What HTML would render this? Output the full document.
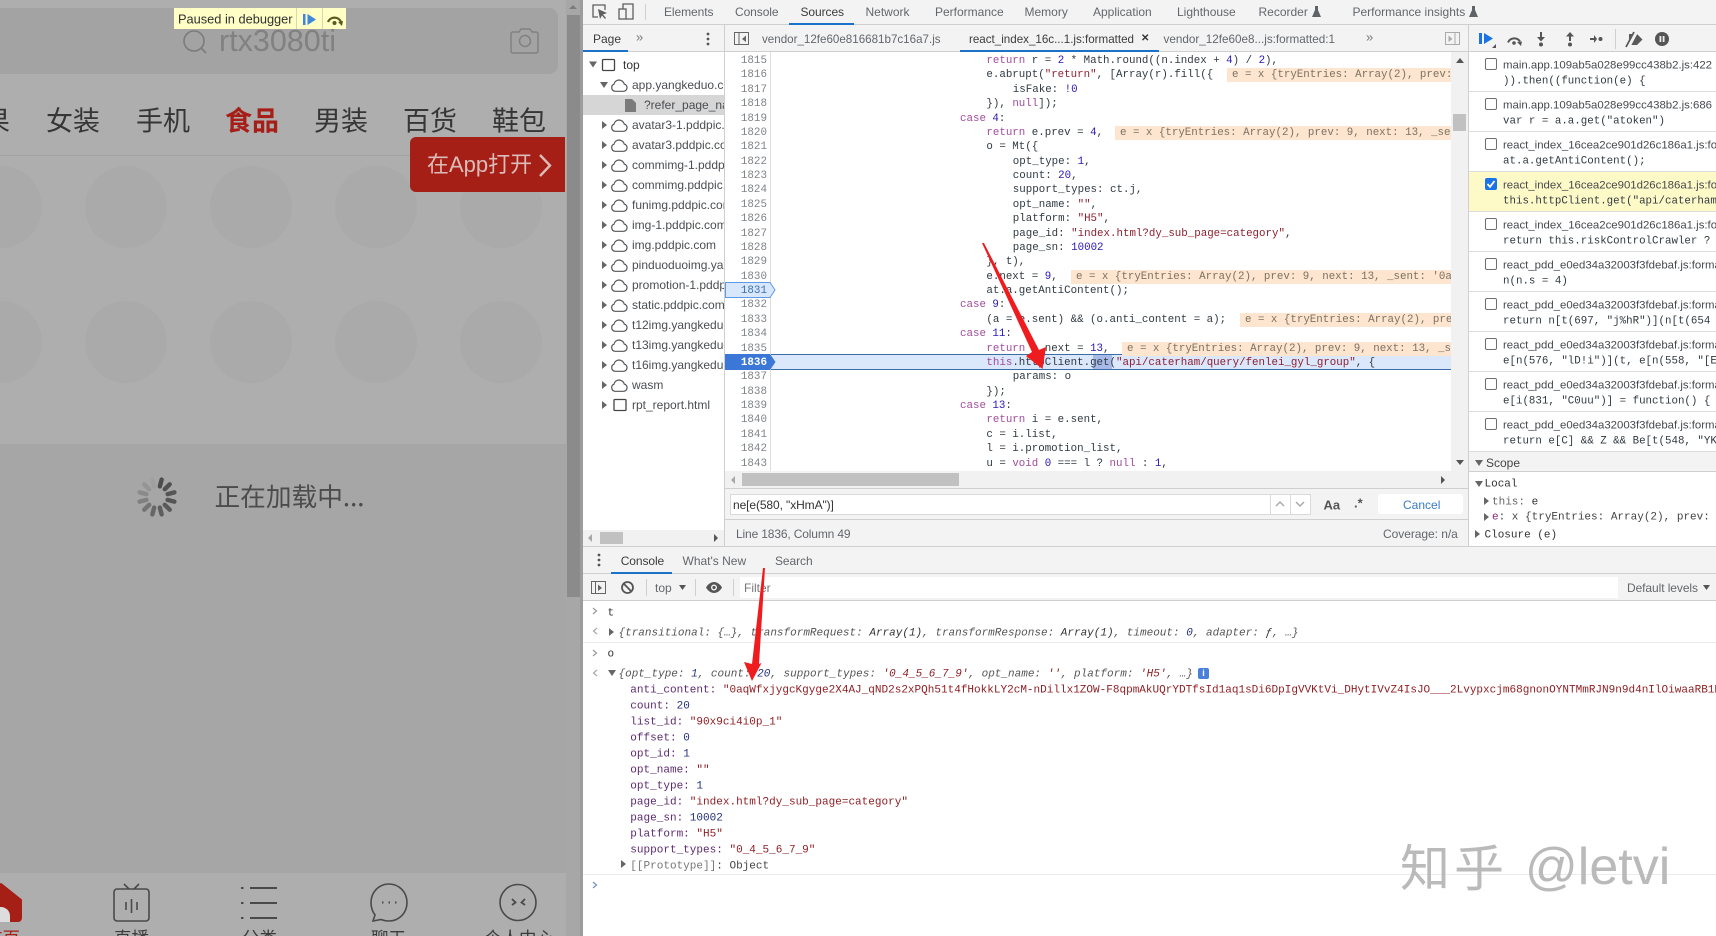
<!DOCTYPE html>
<html lang="zh"><head><meta charset="utf-8"><title>DevTools</title>
<style>
*{box-sizing:border-box}
html,body{margin:0;padding:0;width:1716px;height:936px;overflow:hidden;background:#fff}
body{position:relative;font-family:"Liberation Sans","Noto Sans CJK SC",sans-serif;font-size:12px;color:#63676c}
.a{position:absolute}
.t{position:absolute;white-space:nowrap;line-height:1;transform:translateY(-50%)}
.m{font-family:"Liberation Mono","DejaVu Sans Mono",monospace}
svg{position:absolute;overflow:visible}
.cat{font-size:27px;color:#363636;font-family:"Noto Sans CJK SC",sans-serif}
.nav{font-size:17.5px;color:#3c3c3c;font-family:"Noto Sans CJK SC",sans-serif}
.dot{position:absolute;border-radius:50%;background:#aaa;width:82px;height:82px}
.tree{left:632px;color:#4a4e52}
.code{position:absolute;left:724px;top:54px;width:727px;height:417px;overflow:hidden;font:10.8px/14.39px "Liberation Mono","DejaVu Sans Mono",monospace;color:#303942}
.l{position:relative;height:14.39px;white-space:pre}
.n{position:absolute;left:0;width:43px;text-align:right;color:#808488;font-size:10.9px}
.x{position:absolute;left:236px}.y{position:absolute;left:262.4px}.z{position:absolute;left:288.8px}
.K{color:#a14c9c}.N{color:#2a17b8}.S{color:#8d2030}
.v{position:absolute;right:0;top:0;height:14px;background:#fde5cf;color:#7d7163;padding-left:5px;overflow:hidden}
.cb{position:absolute;left:1485px;width:12px;height:12px;border:1px solid #6f6f6f;border-radius:2px;background:#fff}
.bl{position:absolute;left:1469px;width:247px;height:1px;background:#dcdcdc}
.r1{left:1503px;color:#46494d;font-size:11.4px}
.r2{left:1503px;font-size:10.8px;color:#303942}
.cv{left:630.3px;font-size:11.03px;font-family:"Liberation Mono","DejaVu Sans Mono",monospace;color:#5c2a70}
.cv .S{color:#8f1f24}.cv .N{color:#24307c}.cv .P{color:#444}
</style></head>
<body>

<!-- LEFT: mobile page -->
<div class="a" style="left:0;top:0;width:566px;height:444px;background:#aeaeae"></div>
<div class="a" style="left:0;top:444px;width:566px;height:429px;background:#a6a6a6"></div>
<div class="a" style="left:0;top:873px;width:566px;height:63px;background:#aeaeae"></div>
<div class="a" style="left:566px;top:0;width:14px;height:936px;background:#a7a7a7"></div>
<div class="a" style="left:567px;top:15px;width:13px;height:582px;background:#8b8b8b"></div>
<svg style="left:568px;top:3px" width="10" height="8"><path d="M1 6L5 2 9 6z" fill="#7c7c7c"/></svg>
<div class="a" style="left:-12px;top:8px;width:570px;height:66px;background:#a3a3a3;border-radius:9px"></div>
<div class="t" style="left:219px;top:41px;font-size:30.5px;color:#818181">rtx3080ti</div>
<svg style="left:183px;top:30px" width="25" height="24" fill="none" stroke="#7b7b7b" stroke-width="1.6"><circle cx="11" cy="11" r="10"/><path d="M18 18l5 5"/></svg>
<svg style="left:510px;top:27px" width="30" height="27" fill="none" stroke="#818181" stroke-width="1.5"><path d="M3 5h6l2-3h9l2 3h4a2 2 0 0 1 2 2v17a2 2 0 0 1-2 2H3a2 2 0 0 1-2-2V7a2 2 0 0 1 2-2z"/><circle cx="15" cy="14" r="5.5"/></svg>

<div class="a" style="left:0;top:155px;width:566px;height:1px;background:#a3a3a3"></div>
<div class="t cat" style="left:-17px;top:119px">果</div>
<div class="t cat" style="left:46px;top:119px">女装</div>
<div class="t cat" style="left:136px;top:119px">手机</div>
<div class="t cat" style="left:225px;top:119px;color:#a61e17;font-weight:700">食品</div>
<div class="t cat" style="left:314px;top:119px">男装</div>
<div class="t cat" style="left:403px;top:119px">百货</div>
<div class="t cat" style="left:492px;top:119px">鞋包</div>

<div class="dot" style="left:-40px;top:166px"></div><div class="dot" style="left:85px;top:166px"></div><div class="dot" style="left:210px;top:166px"></div><div class="dot" style="left:335px;top:166px"></div><div class="dot" style="left:460px;top:166px"></div>
<div class="dot" style="left:-40px;top:301px"></div><div class="dot" style="left:85px;top:301px"></div><div class="dot" style="left:210px;top:301px"></div><div class="dot" style="left:335px;top:301px"></div><div class="dot" style="left:460px;top:301px"></div>

<div class="a" style="left:410px;top:137px;width:155px;height:55px;background:#a61f17;border-radius:6px 0 0 6px"></div>
<div class="t" style="left:427px;top:165px;font-size:22px;color:#dcbcb8;font-family:'Liberation Sans','Noto Sans CJK SC',sans-serif">在App打开</div>
<svg style="left:538px;top:154px" width="14" height="23" fill="none" stroke="#dcbcb8" stroke-width="2.4"><path d="M2 1l10 10.5L2 22"/></svg>

<!-- paused banner -->
<div class="a" style="left:174px;top:8px;width:172px;height:21px;background:#ffffc6"></div>
<div class="t" style="left:178px;top:20px;font-size:12.8px;color:#303030">Paused in debugger</div>
<div class="a" style="left:296px;top:8px;width:1px;height:21px;background:#d8d8b0"></div>
<div class="a" style="left:322px;top:8px;width:1px;height:21px;background:#d8d8b0"></div>
<svg style="left:302px;top:13px" width="15" height="14"><path d="M1 1h2.5v11H1z" fill="#3f86dc"/><path d="M5.5 1L14 6.5 5.500 12z" fill="#3f86dc"/></svg>
<svg style="left:326px;top:13px" width="18" height="14" fill="none"><path d="M2 9a7 7 0 0 1 13 0" stroke="#5a5a20" stroke-width="2.2"/><path d="M12 9l5-1-1 5z" fill="#5a5a20"/><circle cx="8.5" cy="10" r="2" fill="#5a5a20"/></svg>

<!-- spinner -->
<svg style="left:136px;top:476px" width="42" height="42" viewBox="-21 -21 42 42" stroke="#4d4d4d" stroke-width="4.4" stroke-linecap="round">
<g><line x1="0" y1="-11" x2="0" y2="-18" transform="rotate(15)" opacity="1"/><line x1="0" y1="-11" x2="0" y2="-18" transform="rotate(45)" opacity=".95"/><line x1="0" y1="-11" x2="0" y2="-18" transform="rotate(75)" opacity=".9"/><line x1="0" y1="-11" x2="0" y2="-18" transform="rotate(105)" opacity=".9"/><line x1="0" y1="-11" x2="0" y2="-18" transform="rotate(135)" opacity=".85"/><line x1="0" y1="-11" x2="0" y2="-18" transform="rotate(165)" opacity=".8"/><line x1="0" y1="-11" x2="0" y2="-18" transform="rotate(195)" opacity=".7"/><line x1="0" y1="-11" x2="0" y2="-18" transform="rotate(225)" opacity=".55"/><line x1="0" y1="-11" x2="0" y2="-18" transform="rotate(255)" opacity=".42"/><line x1="0" y1="-11" x2="0" y2="-18" transform="rotate(285)" opacity=".3"/><line x1="0" y1="-11" x2="0" y2="-18" transform="rotate(315)" opacity=".18"/><line x1="0" y1="-11" x2="0" y2="-18" transform="rotate(345)" opacity=".06"/></g></svg>
<div class="t" style="left:214.5px;top:496px;font-size:25.7px;color:#4c4c4c;font-family:'Noto Sans CJK SC',sans-serif">正在加载中...</div>

<!-- bottom nav -->
<svg style="left:-20px;top:883px" width="44" height="40"><path d="M21 1L41 17v18a3 3 0 0 1-3 3H4a3 3 0 0 1-3-3V17z" fill="#a61f17" stroke="#a61f17" stroke-width="2" stroke-linejoin="round"/><path d="M12 39v-6a9 9 0 0 1 18 0v6z" fill="#ddd"/></svg>
<svg style="left:113px;top:883px" width="38" height="39" fill="none" stroke="#4a4a4a" stroke-width="1.6"><rect x="1" y="6" width="35" height="32" rx="3"/><path d="M11 1l5 5M26 1l-5 5"/><path d="M13 19v8M18.500 16v14M24 19v8"/></svg>
<svg style="left:240px;top:885px" width="38" height="36" stroke="#4a4a4a"><path d="M10 3h27M10 18h27M10 33h27" stroke-width="2"/><path d="M1 3h2.500M1 18h2.500M1 33h2.500" stroke-width="2"/></svg>
<svg style="left:370px;top:883px" width="39" height="40" fill="none" stroke="#4a4a4a" stroke-width="1.6"><path d="M19 1c10 0 18 8 18 18.500S29 38 19 38c-3 0-6-.7-8-1.500L3 38l2-6c-2.600-3.500-4-8-4-12.500C1 9 9 1 19 1z"/><path d="M12 19.500h1.500M18.500 19.500h1.500M25 19.500h1.500" stroke-width="2"/></svg>
<svg style="left:499px;top:883px" width="39" height="40" fill="none" stroke="#4a4a4a" stroke-width="1.6"><circle cx="19" cy="19.500" r="18"/><path d="M13 16l3.500 3.500L13 22M26 16l-3.500 3.500L26 22" stroke-width="1.800"/></svg>
<div class="t nav" style="left:-15px;top:938px;color:#a61f17">首页</div>
<div class="t nav" style="left:114px;top:938px">直播</div>
<div class="t nav" style="left:242px;top:938px">分类</div>
<div class="t nav" style="left:371px;top:938px">聊天</div>
<div class="t nav" style="left:484px;top:938px">个人中心</div>

<!-- DEVTOOLS base -->
<div class="a" style="left:580px;top:0;width:3px;height:936px;background:#9c9c9c"></div>
<div class="a" style="left:583px;top:0;width:1133px;height:25px;background:#f3f3f3;border-bottom:1px solid #cfcfcf"></div>
<div class="a" style="left:583px;top:25px;width:1133px;height:27px;background:#f3f3f3;border-bottom:1px solid #cfcfcf"></div>

<svg style="left:592px;top:4px" width="16" height="15" fill="none" stroke="#5f5f5f" stroke-width="1.300"><path d="M6 13H1V1h12v5"/><path d="M6 5l9 4-4 1.500L14 14l-1 1-3-3.500L8 15z" fill="#5f5f5f" stroke="none"/></svg>
<svg style="left:618px;top:3px" width="16" height="17" fill="none" stroke="#5f5f5f" stroke-width="1.300"><path d="M5 6V1h10v15H8"/><rect x="1" y="6" width="7" height="10" fill="#f3f3f3"/></svg>
<div class="a" style="left:645px;top:4px;width:1px;height:16px;background:#cfcfcf"></div>
<div class="t" style="left:664px;top:12px;letter-spacing:-.08px">Elements</div>
<div class="t" style="left:735px;top:12px;letter-spacing:-.08px">Console</div>
<div class="t" style="left:800.500px;top:12px;color:#3c3c3c;letter-spacing:-.08px">Sources</div>
<div class="a" style="left:789px;top:23px;width:65px;height:2px;background:#1a73c8"></div>
<div class="t" style="left:865.500px;top:12px">Network</div>
<div class="t" style="left:935px;top:12px">Performance</div>
<div class="t" style="left:1024.500px;top:12px">Memory</div>
<div class="t" style="left:1093px;top:12px">Application</div>
<div class="t" style="left:1177px;top:12px">Lighthouse</div>
<div class="t" style="left:1258.500px;top:12px">Recorder</div>
<svg style="left:1312px;top:6px" width="9" height="11"><path d="M3 0h3v4l3 7H0l3-7z" fill="#5f6368"/></svg>
<div class="t" style="left:1352.500px;top:12px">Performance insights</div>
<svg style="left:1469px;top:6px" width="9" height="11"><path d="M3 0h3v4l3 7H0l3-7z" fill="#5f6368"/></svg>

<div class="t" style="left:593px;top:39px;color:#3c3c3c">Page</div>
<div class="a" style="left:583px;top:50px;width:45px;height:2px;background:#1a73c8"></div>
<div class="t" style="left:636px;top:37px;font-size:13px;color:#777">»</div>
<svg style="left:706px;top:32px" width="4" height="14" fill="#555"><circle cx="2" cy="2" r="1.400"/><circle cx="2" cy="7" r="1.400"/><circle cx="2" cy="12" r="1.400"/></svg>
<div class="a" style="left:724px;top:25px;width:1px;height:521px;background:#cfcfcf"></div>
<svg style="left:734px;top:32px" width="16" height="14" fill="none" stroke="#666"><rect x=".5" y=".5" width="14" height="12"/><path d="M5 1v12" /><path d="M12 3.500L8 7l4 3z" fill="#666" stroke="none"/></svg>
<div class="t" style="left:762px;top:40px;font-size:11.6px">vendor_12fe60e816681b7c16a7.js</div>
<div class="t" style="left:969px;top:40px;font-size:11.6px;color:#3c3c3c">react_index_16c...1.js:formatted</div>
<div class="t" style="left:1141px;top:38.500px;font-size:10px;color:#333;font-weight:700">✕</div>
<div class="a" style="left:960px;top:50px;width:199px;height:2px;background:#1a73c8"></div>
<div class="t" style="left:1163.500px;top:40px;font-size:11.7px">vendor_12fe60e8...js:formatted:1</div>
<div class="t" style="left:1366px;top:37px;font-size:13px;color:#777">»</div>
<svg style="left:1445px;top:32px" width="16" height="14" fill="none" stroke="#aaa"><rect x=".5" y=".5" width="14" height="12"/><path d="M10 1v12"/><path d="M3.500 3.500L7.500 7l-4 3z" fill="#aaa" stroke="none"/></svg>
<div class="a" style="left:1468px;top:25px;width:1px;height:521px;background:#cfcfcf"></div>

<!-- debug toolbar -->
<svg style="left:1479px;top:31px" width="18" height="18"><path d="M0 2h3v11H0z" fill="#1a73e8"/><path d="M5 2l9 5.500L5 13z" fill="#1a73e8"/><path d="M13 17l4-4v4z" fill="#555"/></svg>
<svg style="left:1506px;top:33px" width="17" height="13" fill="none"><path d="M2 9.500a6.800 6.800 0 0 1 12-1" stroke="#555" stroke-width="2"/><path d="M11 9l5-.500-1 4.500z" fill="#555"/><circle cx="8" cy="10" r="1.800" fill="#555"/></svg>
<svg style="left:1536px;top:32px" width="10" height="15" fill="#555"><path d="M4 0h2v5h3L5 9.500 1 5h3z"/><circle cx="5" cy="12.500" r="2"/></svg>
<svg style="left:1565px;top:32px" width="10" height="15" fill="#555"><path d="M5 0l4 4.500H6V9H4V4.500H1z"/><circle cx="5" cy="12.500" r="2"/></svg>
<svg style="left:1590px;top:34px" width="13" height="10" fill="#555"><path d="M0 4h4V1l3 4-3 4V6H0z"/><circle cx="10.500" cy="5" r="2"/></svg>
<div class="a" style="left:1615px;top:29px;width:1px;height:20px;background:#cfcfcf"></div>
<svg style="left:1625px;top:32px" width="18" height="15"><path d="M4 2h8l5.500 5.500L12 13H4z" fill="#5a5a5a"/><path d="M11 0L3 15" stroke="#f3f3f3" stroke-width="4"/><path d="M9 0L1 15" stroke="#5a5a5a" stroke-width="1.800"/></svg>
<svg style="left:1655px;top:32px" width="14" height="14"><circle cx="7" cy="7" r="7" fill="#555"/><path d="M4.500 4h1.800v6H4.500zM7.700 4h1.800v6H7.700z" fill="#eee"/></svg>

<!-- file tree -->
<div class="a" style="left:583px;top:95px;width:141px;height:20px;background:#d6d6d6"></div>
<svg width="0" height="0"><symbol id="cl" viewBox="0 0 18 13"><path d="M5 12.300H13.500a3.700 3.700 0 0 0 .7-7.300A5.400 5.400 0 0 0 9 1 5.200 5.200 0 0 0 4 5.200 3.700 3.700 0 0 0 5 12.300z" fill="none" stroke="#555" stroke-width="1.200"/></symbol></svg>
<div class="a" style="left:583px;top:52px;width:141px;height:478px;overflow:hidden">
<svg style="left:-583px;top:-52px" width="724" height="530" >
<g fill="#666"><path d="M589 61.500h8l-4 6zM600 82l8 0-4 6z"/><path d="M602 121v8l5-4zM602 141v8l5-4zM602 161v8l5-4zM602 181v8l5-4zM602 201v8l5-4zM602 221v8l5-4zM602 241v8l5-4zM602 261v8l5-4zM602 281v8l5-4zM602 301v8l5-4zM602 321v8l5-4zM602 341v8l5-4zM602 361v8l5-4zM602 381v8l5-4zM602 401v8l5-4z"/></g>
<rect x="602.500" y="59.500" width="12" height="11" rx="1" fill="none" stroke="#444" stroke-width="1.300"/>
<path d="M625 99h7l4 4v9h-11z" fill="#7b7b7b"/>
<use href="#cl" x="610" y="79" width="18" height="13"/><use href="#cl" x="610" y="119" width="18" height="13"/><use href="#cl" x="610" y="139" width="18" height="13"/><use href="#cl" x="610" y="159" width="18" height="13"/><use href="#cl" x="610" y="179" width="18" height="13"/><use href="#cl" x="610" y="199" width="18" height="13"/><use href="#cl" x="610" y="219" width="18" height="13"/><use href="#cl" x="610" y="239" width="18" height="13"/><use href="#cl" x="610" y="259" width="18" height="13"/><use href="#cl" x="610" y="279" width="18" height="13"/><use href="#cl" x="610" y="299" width="18" height="13"/><use href="#cl" x="610" y="319" width="18" height="13"/><use href="#cl" x="610" y="339" width="18" height="13"/><use href="#cl" x="610" y="359" width="18" height="13"/><use href="#cl" x="610" y="379" width="18" height="13"/>
<rect x="614" y="399.500" width="12" height="11" rx="1" fill="none" stroke="#444" stroke-width="1.300"/>
</svg>
<div class="t tree" style="left:40px;top:13px;color:#333">top</div>
<div class="t tree" style="left:49px;top:33px">app.yangkeduo.com</div>
<div class="t tree" style="left:61px;top:53px">?refer_page_name=index</div>
<div class="t tree" style="left:49px;top:73px">avatar3-1.pddpic.com</div>
<div class="t tree" style="left:49px;top:93px">avatar3.pddpic.com</div>
<div class="t tree" style="left:49px;top:113px">commimg-1.pddpic.com</div>
<div class="t tree" style="left:49px;top:133px">commimg.pddpic.com</div>
<div class="t tree" style="left:49px;top:153px">funimg.pddpic.com</div>
<div class="t tree" style="left:49px;top:173px">img-1.pddpic.com</div>
<div class="t tree" style="left:49px;top:193px">img.pddpic.com</div>
<div class="t tree" style="left:49px;top:213px">pinduoduoimg.yangkeduo.com</div>
<div class="t tree" style="left:49px;top:233px">promotion-1.pddpic.com</div>
<div class="t tree" style="left:49px;top:253px">static.pddpic.com</div>
<div class="t tree" style="left:49px;top:273px">t12img.yangkeduo.com</div>
<div class="t tree" style="left:49px;top:293px">t13img.yangkeduo.com</div>
<div class="t tree" style="left:49px;top:313px">t16img.yangkeduo.com</div>
<div class="t tree" style="left:49px;top:333px">wasm</div>
<div class="t tree" style="left:49px;top:353px">rpt_report.html</div>
</div>
<div class="a" style="left:583px;top:530px;width:141px;height:16px;background:#f1f1f1"></div>
<div class="a" style="left:600px;top:532px;width:23px;height:12px;background:#c1c1c1"></div>
<svg style="left:587px;top:534px" width="6" height="8"><path d="M5 0v8L1 4z" fill="#a8a8a8"/></svg>
<svg style="left:713px;top:534px" width="6" height="8"><path d="M1 0v8l4-4z" fill="#555"/></svg>

<!-- code -->
<div class="a" style="left:725px;top:52px;width:726px;height:419px;background:#fff"></div>
<div class="a" style="left:770px;top:52px;width:1px;height:419px;background:#dedede"></div>
<div class="a" style="left:771px;top:354px;width:680px;height:15.500px;background:#dbe7fb;border-top:1px solid #3a6ca8;border-bottom:1px solid #3a6ca8"></div>
<div class="a" style="left:1092.500px;top:355px;width:19.500px;height:13.500px;background:#a8bbe8"></div>
<svg style="left:725px;top:282px" width="51" height="16"><path d="M.5.500H45L50 8l-5 7.500H.5z" fill="#d8e7fb" stroke="#5b9ae6"/></svg>
<svg style="left:725px;top:354px" width="51" height="16"><path d="M0 0H45L50.500 8 45 16H0z" fill="#3a77d6"/></svg>
<div class="code"><div class="l"><span class="n">1815</span><span class="y"><span class="K">return</span> r = <span class="N">2</span> * Math.round((n.index + <span class="N">4</span>) / <span class="N">2</span>),</span></div><div class="l"><span class="n">1816</span><span class="y">e.abrupt(<span class="S">"return"</span>, [Array(r).fill({</span><span class="v" style="left:503px">e = x {tryEntries: Array(2), prev: 9, next: 13, _sent</span></div><div class="l"><span class="n">1817</span><span class="z">isFake: <span class="N">!0</span></span></div><div class="l"><span class="n">1818</span><span class="y">}), <span class="K">null</span>]);</span></div><div class="l"><span class="n">1819</span><span class="x"><span class="K">case</span> <span class="N">4</span>:</span></div><div class="l"><span class="n">1820</span><span class="y"><span class="K">return</span> e.prev = <span class="N">4</span>,</span><span class="v" style="left:391px">e = x {tryEntries: Array(2), prev: 9, next: 13, _sent: '0aqWfxjyg</span></div><div class="l"><span class="n">1821</span><span class="y">o = Mt({</span></div><div class="l"><span class="n">1822</span><span class="z">opt_type: <span class="N">1</span>,</span></div><div class="l"><span class="n">1823</span><span class="z">count: <span class="N">20</span>,</span></div><div class="l"><span class="n">1824</span><span class="z">support_types: ct.j,</span></div><div class="l"><span class="n">1825</span><span class="z">opt_name: <span class="S">""</span>,</span></div><div class="l"><span class="n">1826</span><span class="z">platform: <span class="S">"H5"</span>,</span></div><div class="l"><span class="n">1827</span><span class="z">page_id: <span class="S">"index.html?dy_sub_page=category"</span>,</span></div><div class="l"><span class="n">1828</span><span class="z">page_sn: <span class="N">10002</span></span></div><div class="l"><span class="n">1829</span><span class="y">}, t),</span></div><div class="l"><span class="n">1830</span><span class="y">e.next = <span class="N">9</span>,</span><span class="v" style="left:347px">e = x {tryEntries: Array(2), prev: 9, next: 13, _sent: '0aqWfxjygcKgy</span></div><div class="l"><span class="n" style="color:#3a72b0">1831</span><span class="y">at.a.getAntiContent();</span></div><div class="l"><span class="n">1832</span><span class="x"><span class="K">case</span> <span class="N">9</span>:</span></div><div class="l"><span class="n">1833</span><span class="y">(a = e.sent) &amp;&amp; (o.anti_content = a);</span><span class="v" style="left:516px">e = x {tryEntries: Array(2), prev: 9, next: 13</span></div><div class="l"><span class="n">1834</span><span class="x"><span class="K">case</span> <span class="N">11</span>:</span></div><div class="l"><span class="n">1835</span><span class="y"><span class="K">return</span> e.next = <span class="N">13</span>,</span><span class="v" style="left:398px">e = x {tryEntries: Array(2), prev: 9, next: 13, _sent: '0aqWfxjyg</span></div><div class="l"><span class="n" style="color:#fff;font-weight:700">1836</span><span class="y"><span class="K">this</span>.httpClient.get(<span class="S">"api/caterham/query/fenlei_gyl_group"</span>, {</span></div><div class="l"><span class="n">1837</span><span class="z">params: o</span></div><div class="l"><span class="n">1838</span><span class="y">});</span></div><div class="l"><span class="n">1839</span><span class="x"><span class="K">case</span> <span class="N">13</span>:</span></div><div class="l"><span class="n">1840</span><span class="y"><span class="K">return</span> i = e.sent,</span></div><div class="l"><span class="n">1841</span><span class="y">c = i.list,</span></div><div class="l"><span class="n">1842</span><span class="y">l = i.promotion_list,</span></div><div class="l"><span class="n">1843</span><span class="y">u = <span class="K">void</span> <span class="N">0</span> === l ? <span class="K">null</span> : <span class="N">1</span>,</span></div></div>

<!-- code scrollbars -->
<div class="a" style="left:1451px;top:52px;width:17px;height:436px;background:#f1f1f1"></div>
<div class="a" style="left:1453px;top:114px;width:13px;height:17px;background:#c1c1c1"></div>
<svg style="left:1456px;top:58px" width="8" height="5"><path d="M0 5L4 0l4 5z" fill="#555"/></svg>
<svg style="left:1456px;top:460px" width="8" height="5"><path d="M0 0h8L4 5z" fill="#555"/></svg>
<div class="a" style="left:725px;top:471px;width:726px;height:17px;background:#f1f1f1"></div>
<div class="a" style="left:742px;top:473px;width:217px;height:13px;background:#c1c1c1"></div>
<svg style="left:730px;top:476px" width="6" height="8"><path d="M5 0v8L1 4z" fill="#a8a8a8"/></svg>
<svg style="left:1440px;top:476px" width="6" height="8"><path d="M1 0v8l4-4z" fill="#555"/></svg>

<!-- find bar -->
<div class="a" style="left:725px;top:488px;width:743px;height:1px;background:#cfcfcf"></div>
<div class="a" style="left:725px;top:489px;width:743px;height:30px;background:#f3f3f3"></div>
<div class="a" style="left:730px;top:494px;width:581px;height:20.500px;background:#fff;border:1px solid #dadada"></div>
<div class="t" style="left:733px;top:505px;color:#333;letter-spacing:-.1px">ne[e(580, "xHmA")]</div>
<div class="a" style="left:1270px;top:494px;width:1px;height:20px;background:#dadada"></div>
<div class="a" style="left:1290px;top:494px;width:1px;height:20px;background:#dadada"></div>
<svg style="left:1275px;top:501px" width="10" height="6" fill="none" stroke="#aaa" stroke-width="1.500"><path d="M1 5l4-4 4 4"/></svg>
<svg style="left:1295px;top:501px" width="10" height="6" fill="none" stroke="#aaa" stroke-width="1.500"><path d="M1 1l4 4 4-4"/></svg>
<div class="t" style="left:1323.500px;top:505px;color:#555;font-weight:700;font-size:13px">Aa</div>
<div class="t" style="left:1354px;top:503px;color:#555;font-weight:700;font-size:13px">.*</div>
<div class="a" style="left:1378px;top:494px;width:85px;height:20px;background:#fff;border-radius:3px"></div>
<div class="t" style="left:1403px;top:505px;color:#3a7bc8">Cancel</div>

<!-- status bar -->
<div class="a" style="left:725px;top:519px;width:743px;height:1px;background:#cfcfcf"></div>
<div class="a" style="left:725px;top:520px;width:743px;height:26px;background:#f3f3f3"></div>
<div class="t" style="left:736px;top:534px;letter-spacing:-.15px">Line 1836, Column 49</div>
<div class="t" style="left:1383px;top:534px;letter-spacing:-.05px">Coverage: n/a</div>

<!-- right panel -->
<div class="a" style="left:1469px;top:52px;width:247px;height:400px;background:#fff"></div>
<div class="a" style="left:1469px;top:172px;width:247px;height:39.500px;background:#fefac8"></div>
<div class="bl" style="top:91px"></div><div class="bl" style="top:131px"></div><div class="bl" style="top:171px"></div><div class="bl" style="top:211px"></div><div class="bl" style="top:251px"></div><div class="bl" style="top:291px"></div><div class="bl" style="top:331px"></div><div class="bl" style="top:371px"></div><div class="bl" style="top:411px"></div><div class="bl" style="top:451px"></div>
<div class="cb" style="top:58px"></div><div class="cb" style="top:98px"></div><div class="cb" style="top:138px"></div>
<div class="cb" style="top:178px;background:#1a73e8;border-color:#1a73e8"></div>
<svg style="left:1486px;top:179px" width="10" height="10" fill="none" stroke="#fff" stroke-width="1.800"><path d="M1.500 5l2.500 2.800L8.500 2"/></svg>
<div class="cb" style="top:218px"></div><div class="cb" style="top:258px"></div><div class="cb" style="top:298px"></div><div class="cb" style="top:338px"></div><div class="cb" style="top:378px"></div><div class="cb" style="top:418px"></div>
<div class="t r1" style="top:65.500px">main.app.109ab5a028e99cc438b2.js:422</div><div class="t r2 m" style="top:81.500px">)).then((function(e) {</div>
<div class="t r1" style="top:105.500px">main.app.109ab5a028e99cc438b2.js:686</div><div class="t r2 m" style="top:121.500px">var r = a.a.get("atoken")</div>
<div class="t r1" style="top:145.500px">react_index_16cea2ce901d26c186a1.js:formatted</div><div class="t r2 m" style="top:161.500px">at.a.getAntiContent();</div>
<div class="t r1" style="top:185.500px">react_index_16cea2ce901d26c186a1.js:formatted</div><div class="t r2 m" style="top:201.500px">this.httpClient.get("api/caterham</div>
<div class="t r1" style="top:225.500px">react_index_16cea2ce901d26c186a1.js:formatted</div><div class="t r2 m" style="top:241.500px">return this.riskControlCrawler ?</div>
<div class="t r1" style="top:265.500px">react_pdd_e0ed34a32003f3fdebaf.js:formatted</div><div class="t r2 m" style="top:281.500px">n(n.s = 4)</div>
<div class="t r1" style="top:305.500px">react_pdd_e0ed34a32003f3fdebaf.js:formatted</div><div class="t r2 m" style="top:321.500px">return n[t(697, "j%hR")](n[t(654</div>
<div class="t r1" style="top:345.500px">react_pdd_e0ed34a32003f3fdebaf.js:formatted</div><div class="t r2 m" style="top:361.500px">e[n(576, "lD!i")](t, e[n(558, "[E</div>
<div class="t r1" style="top:385.500px">react_pdd_e0ed34a32003f3fdebaf.js:formatted</div><div class="t r2 m" style="top:401.500px">e[i(831, "C0uu")] = function() {</div>
<div class="t r1" style="top:425.500px">react_pdd_e0ed34a32003f3fdebaf.js:formatted</div><div class="t r2 m" style="top:441.500px">return e[C] &amp;&amp; Z &amp;&amp; Be[t(548, "YK</div>

<div class="a" style="left:1469px;top:452px;width:247px;height:20px;background:#f3f3f3;border-bottom:1px solid #cfcfcf"></div>
<svg style="left:1475px;top:460px" width="8" height="6"><path d="M0 0h8L4 6z" fill="#666"/></svg>
<div class="t" style="left:1486px;top:463px;color:#444">Scope</div>
<div class="a" style="left:1469px;top:472px;width:247px;height:74px;background:#fff"></div>
<svg style="left:1475px;top:481px" width="8" height="6"><path d="M0 0h8L4 6z" fill="#666"/></svg>
<div class="t m" style="left:1484.500px;top:484.500px;font-size:11px;color:#333">Local</div>
<svg style="left:1484px;top:497px" width="6" height="8"><path d="M0 0v8l5-4z" fill="#666"/></svg>
<div class="t m" style="left:1492px;top:502.500px;font-size:11px;color:#666">this: <span style="color:#333">e</span></div>
<svg style="left:1484px;top:513px" width="6" height="8"><path d="M0 0v8l5-4z" fill="#666"/></svg>
<div class="t m" style="left:1492px;top:518px;font-size:11px;color:#444"><span style="color:#8a2a7c">e</span>: x {tryEntries: Array(2), prev: 9</div>
<svg style="left:1475px;top:530px" width="6" height="8"><path d="M0 0v8l5-4z" fill="#666"/></svg>
<div class="t m" style="left:1484.500px;top:535.500px;font-size:11px;color:#333">Closure (e)</div>

<!-- drawer -->
<div class="a" style="left:583px;top:546px;width:1133px;height:1px;background:#cfcfcf"></div>
<div class="a" style="left:583px;top:547px;width:1133px;height:54px;background:#f3f3f3"></div>
<div class="a" style="left:583px;top:573px;width:1133px;height:1px;background:#cfcfcf"></div>
<div class="a" style="left:583px;top:600px;width:1133px;height:1px;background:#cfcfcf"></div>
<svg style="left:597px;top:553px" width="4" height="14" fill="#555"><circle cx="2" cy="2" r="1.400"/><circle cx="2" cy="7" r="1.400"/><circle cx="2" cy="12" r="1.400"/></svg>
<div class="t" style="left:620.700px;top:561px;color:#3c3c3c;letter-spacing:-.08px">Console</div>
<div class="a" style="left:611px;top:571.500px;width:61px;height:2px;background:#1a73c8"></div>
<div class="t" style="left:682.500px;top:561px">What's New</div>
<div class="t" style="left:775px;top:561px;letter-spacing:-.08px">Search</div>

<svg style="left:591px;top:581px" width="15" height="14" fill="none" stroke="#666"><rect x=".5" y=".5" width="14" height="12"/><path d="M4.500 1v12"/><path d="M7 3.500L11 7l-4 3z" fill="#666" stroke="none"/></svg>
<svg style="left:621px;top:581px" width="13" height="13" fill="none" stroke="#555" stroke-width="1.800"><circle cx="6.500" cy="6.500" r="5.500"/><path d="M2.800 2.800l7.400 7.400"/></svg>
<div class="a" style="left:646px;top:579px;width:1px;height:17px;background:#cfcfcf"></div>
<div class="t" style="left:655px;top:588px">top</div>
<svg style="left:679px;top:585px" width="7" height="5"><path d="M0 0h7L3.500 5z" fill="#555"/></svg>
<div class="a" style="left:695px;top:579px;width:1px;height:17px;background:#cfcfcf"></div>
<svg style="left:706px;top:582px" width="16" height="11"><path d="M0 5.500C2 2 5 0 8 0s6 2 8 5.500C14 9 11 11 8 11S2 9 0 5.500z" fill="#555"/><circle cx="8" cy="5.500" r="3" fill="#f3f3f3"/><circle cx="8" cy="5.500" r="1.600" fill="#555"/></svg>
<div class="a" style="left:733px;top:579px;width:1px;height:17px;background:#cfcfcf"></div>
<div class="a" style="left:740px;top:577px;width:878px;height:21px;background:#fff"></div>
<div class="t" style="left:744px;top:588px;color:#777">Filter</div>
<div class="t" style="left:1627px;top:588px;letter-spacing:-.08px">Default levels</div>
<svg style="left:1703px;top:585px" width="7" height="5"><path d="M0 0h7L3.500 5z" fill="#555"/></svg>

<!-- console -->
<div class="a" style="left:583px;top:642px;width:1133px;height:1px;background:#ececec"></div>
<div class="a" style="left:583px;top:874px;width:1133px;height:1px;background:#ececec"></div>
<svg style="left:592px;top:607px" width="6" height="8" fill="none" stroke="#999" stroke-width="1.200"><path d="M1 1l3.500 3L1 7"/></svg>
<div class="t m" style="left:607.500px;top:613.500px;font-size:11px;color:#333">t</div>
<svg style="left:592px;top:627px" width="6" height="8" fill="none" stroke="#aaa" stroke-width="1.200"><path d="M5 1L1.500 4 5 7"/></svg>
<svg style="left:609px;top:628px" width="6" height="8"><path d="M0 0v8l5-4z" fill="#666"/></svg>
<div class="t m" style="left:618.500px;top:633.500px;font-size:11px;font-style:italic;color:#555">{transitional: {…}, transformRequest: <span style="color:#333">Array(1)</span>, transformResponse: <span style="color:#333">Array(1)</span>, timeout: <span style="color:#24307c">0</span>, adapter: <span style="color:#333">ƒ</span>, …}</div>
<svg style="left:592px;top:649px" width="6" height="8" fill="none" stroke="#999" stroke-width="1.200"><path d="M1 1l3.500 3L1 7"/></svg>
<div class="t m" style="left:607.500px;top:654.500px;font-size:11px;color:#333">o</div>
<svg style="left:592px;top:669px" width="6" height="8" fill="none" stroke="#aaa" stroke-width="1.200"><path d="M5 1L1.500 4 5 7"/></svg>
<svg style="left:608px;top:670px" width="8" height="6"><path d="M0 0h8L4 6z" fill="#666"/></svg>
<div class="t m" style="left:618.500px;top:674.500px;font-size:11px;font-style:italic;color:#555">{opt_type: <span style="color:#24307c">1</span>, count: <span style="color:#24307c">20</span>, support_types: <span style="color:#8f1f24">'0_4_5_6_7_9'</span>, opt_name: <span style="color:#8f1f24">''</span>, platform: <span style="color:#8f1f24">'H5'</span>, …}</div>
<div class="a" style="left:1198px;top:668px;width:11px;height:11px;background:#4a80d8;border-radius:2px;color:#fff;font:700 9px/11px 'Liberation Sans',sans-serif;text-align:center">i</div>
<div class="t cv" style="top:690.500px">anti_content: <span class="S">"0aqWfxjygcKgyge2X4AJ_qND2s2xPQh51t4fHokkLY2cM-nDillx1ZOW-F8qpmAkUQrYDTfsId1aq1sDi6DpIgVVKtVi_DHytIVvZ4IsJO___2Lvypxcjm68gnonOYNTMmRJN9n9d4nIlOiwaaRB1D</span></div>
<div class="t cv" style="top:706.500px">count: <span class="N">20</span></div>
<div class="t cv" style="top:722.500px">list_id: <span class="S">"90x9ci4i0p_1"</span></div>
<div class="t cv" style="top:738.500px">offset: <span class="N">0</span></div>
<div class="t cv" style="top:754.500px">opt_id: <span class="N">1</span></div>
<div class="t cv" style="top:770.500px">opt_name: <span class="S">""</span></div>
<div class="t cv" style="top:786.500px">opt_type: <span class="N">1</span></div>
<div class="t cv" style="top:802.500px">page_id: <span class="S">"index.html?dy_sub_page=category"</span></div>
<div class="t cv" style="top:818.500px">page_sn: <span class="N">10002</span></div>
<div class="t cv" style="top:834.500px">platform: <span class="S">"H5"</span></div>
<div class="t cv" style="top:850.500px">support_types: <span class="S">"0_4_5_6_7_9"</span></div>
<svg style="left:621px;top:860px" width="6" height="8"><path d="M0 0v8l5-4z" fill="#666"/></svg>
<div class="t cv" style="top:866.500px;color:#777">[[Prototype]]<span class="P">: Object</span></div>
<svg style="left:592px;top:881px" width="6" height="8" fill="none" stroke="#6a8fd0" stroke-width="1.200"><path d="M1 1l3.500 3L1 7"/></svg>

<!-- watermark -->
<div class="t" style="left:1400px;top:865px;font-size:50px;color:#bababa;font-family:'Noto Sans CJK SC',sans-serif;letter-spacing:4px">知乎</div>
<div class="t" style="left:1525px;top:867px;font-size:52px;color:#bababa;font-family:'Liberation Sans',sans-serif">@letvi</div>

<!-- red arrows -->
<svg style="left:0;top:0" width="1716" height="936">
<path d="M982 243L1032 352 1026 356 1042.500 369 1046 347 1039 350 984 243z" fill="#ee1c1f"/>
<path d="M763 568L765 568 759 664 761.500 663 752 681 744 662 752 664z" fill="#ee1c1f"/>
</svg>
</body></html>
